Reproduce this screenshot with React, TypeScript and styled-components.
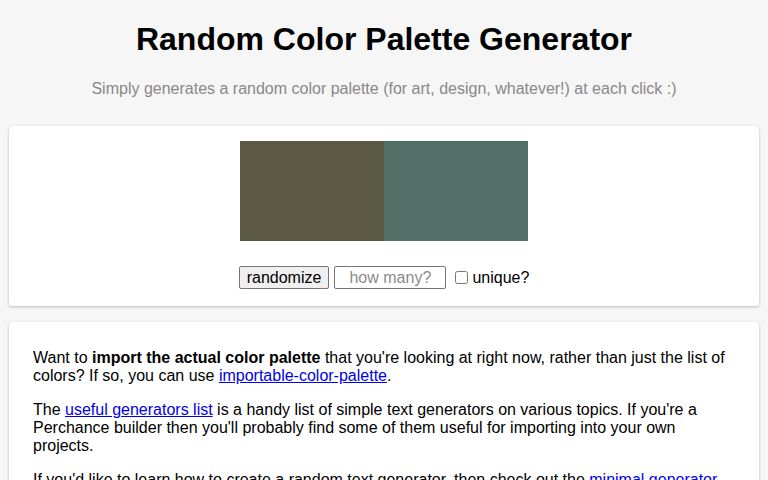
import React from "react";
import styled, { createGlobalStyle } from "styled-components";

const Global = createGlobalStyle`
  html, body { margin: 0; padding: 0; }
  body {
    background: #f6f6f6;
    font-family: "Liberation Sans", Arial, sans-serif;
    font-size: 16px;
    color: #000;
  }
`;

const Page = styled.div`
  display: flex;
  flex-direction: column;
  align-items: stretch;
  padding: 0 9px;
`;

const Title = styled.h1`
  margin: 21px 0 0;
  font-size: 32px;
  font-weight: bold;
  text-align: center;
  line-height: 37px;
`;

const Subtitle = styled.p`
  margin: 22px 0 0;
  text-align: center;
  color: #888;
  line-height: 18px;
`;

const Card = styled.div<{ $pad: string; $mt: number }>`
  background: #fff;
  border-radius: 3px;
  box-shadow: 0 1px 3px rgba(0, 0, 0, 0.25);
  margin-top: ${(p) => p.$mt}px;
  padding: ${(p) => p.$pad};
`;

const Palette = styled.div`
  display: flex;
  justify-content: center;
`;

const Swatch = styled.div<{ $c: string }>`
  width: 144px;
  height: 100px;
  background: ${(p) => p.$c};
`;

const Controls = styled.div`
  display: flex;
  justify-content: center;
  align-items: center;
  margin-top: 25px;
  gap: 5px;
`;

const Button = styled.button`
  font-family: "Liberation Sans", Arial, sans-serif;
  font-size: 16px;
  height: 23px;
  padding: 0 7px;
  background: #efefef;
  border: 1px solid #767676;
  border-radius: 2px;
  color: #000;
`;

const Input = styled.input`
  font-family: "Liberation Sans", Arial, sans-serif;
  font-size: 16px;
  width: 112px;
  height: 23px;
  box-sizing: border-box;
  border: 1px solid #767676;
  border-radius: 2px;
  text-align: center;
  padding: 0 4px;
  &::placeholder { color: #8a8a8a; }
`;

const CheckLabel = styled.label`
  display: flex;
  align-items: center;
  margin-left: 4px;
  input { margin: 0 4px 0 0; width: 13px; height: 13px; }
`;

const Para = styled.p`
  margin: 0 0 16px;
  line-height: 18px;
  a { color: #0000ee; }
`;

export default function App() {
  return (
    <>
      <Global />
      <Page>
        <Title>Random Color Palette Generator</Title>
        <Subtitle>
          Simply generates a random color palette (for art, design, whatever!) at each click :)
        </Subtitle>
        <Card $pad="15px 0 17px" $mt={28}>
          <Palette>
            <Swatch $c="#5b5843" />
            <Swatch $c="#516e67" />
          </Palette>
          <Controls>
            <Button>randomize</Button>
            <Input placeholder="how many?" />
            <CheckLabel>
              <input type="checkbox" />
              unique?
            </CheckLabel>
          </Controls>
        </Card>
        <Card $pad="27px 24px 10px" $mt={16}>
          <Para>
            Want to <b>import the actual color palette</b> that you're looking at right now,
            rather than just the list of colors? If so, you can use{" "}
            <a href="#">importable-color-palette</a>.
          </Para>
          <Para>
            The <a href="#">useful generators list</a> is a handy list of simple text generators
            on various topics. If you're a Perchance builder then you'll probably find some of
            them useful for importing into your own projects.
          </Para>
          <Para>
            If you'd like to learn how to create a random text generator, then check out the{" "}
            <a href="#">minimal generator</a> example and the tutorial.
          </Para>
        </Card>
      </Page>
    </>
  );
}
